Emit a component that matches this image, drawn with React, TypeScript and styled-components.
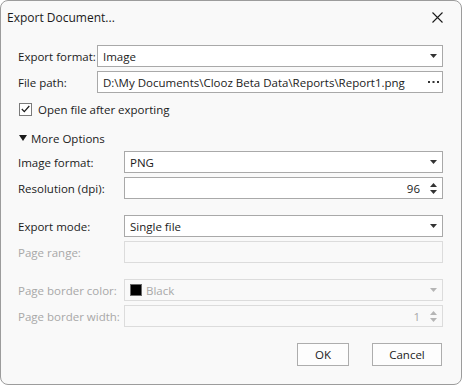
import styled, { createGlobalStyle } from "styled-components";

const GlobalStyle = createGlobalStyle`
  html, body {
    margin: 0;
    padding: 0;
    background: #ffffff;
  }
  * {
    box-sizing: border-box;
  }
`;

const Dialog = styled.div`
  width: 462px;
  height: 385px;
  border: 1px solid #9c9c9c;
  border-radius: 8px;
  background: #f9f9f9;
  font-family: "Segoe UI", "Open Sans", "Noto Sans", sans-serif;
  font-size: 11.5px;
  color: #1b1b1b;
  display: flex;
  flex-direction: column;
  overflow: hidden;
`;

const TitleBar = styled.div`
  height: 33px;
  display: flex;
  align-items: center;
  justify-content: space-between;
  padding: 0 18px 0 6px;
`;

const Title = styled.span`
  font-size: 12px;
`;

const CloseButton = styled.button`
  border: none;
  background: none;
  padding: 0;
  width: 12px;
  height: 12px;
  display: flex;
  align-items: center;
  justify-content: center;
`;

const Content = styled.div`
  padding: 11px 18px 0 17px;
  display: flex;
  flex-direction: column;
`;

const Group = styled.div<{ $label: number; $top?: number }>`
  display: grid;
  grid-template-columns: ${(p) => p.$label}px 1fr;
  row-gap: 4px;
  align-items: center;
  margin-top: ${(p) => p.$top ?? 0}px;
`;

const Label = styled.span<{ $disabled?: boolean }>`
  color: ${(p) => (p.$disabled ? "#a8a8a8" : "#1b1b1b")};
  white-space: nowrap;
`;

const Field = styled.div<{ $disabled?: boolean; $right?: boolean }>`
  height: 22px;
  border: 1px solid ${(p) => (p.$disabled ? "#dcdcdc" : "#a9a9a9")};
  background: ${(p) => (p.$disabled ? "#f9f9f9" : "#ffffff")};
  color: ${(p) => (p.$disabled ? "#a8a8a8" : "#1b1b1b")};
  display: flex;
  align-items: center;
  padding-left: 5px;
  gap: 4px;
`;

const FieldText = styled.span<{ $right?: boolean }>`
  flex: 1;
  text-align: ${(p) => (p.$right ? "right" : "left")};
  white-space: nowrap;
  overflow: hidden;
`;

const Side = styled.span`
  width: 18px;
  height: 100%;
  display: flex;
  flex-direction: column;
  align-items: center;
  justify-content: center;
  gap: 3px;
`;

const Swatch = styled.span`
  width: 12px;
  height: 12px;
  background: #000000;
  border: 1px solid #6a6a6a;
`;

const CheckRow = styled.label`
  height: 20px;
  margin-top: 6px;
  display: flex;
  align-items: center;
  gap: 6px;
  padding-left: 1px;
`;

const CheckBox = styled.span`
  width: 13px;
  height: 13px;
  border: 1px solid #7a7a7a;
  background: #ffffff;
  display: flex;
  align-items: center;
  justify-content: center;
`;

const Expander = styled.div`
  height: 20px;
  margin-top: 9px;
  display: flex;
  align-items: center;
  gap: 4px;
  padding-left: 1px;
`;

const Buttons = styled.div`
  margin-top: 16px;
  display: flex;
  justify-content: flex-end;
  gap: 23px;
  padding-right: 1px;
`;

const Button = styled.button<{ $width: number }>`
  width: ${(p) => p.$width}px;
  height: 23px;
  border: 1px solid #adadad;
  background: #fdfdfd;
  font: inherit;
  color: #1b1b1b;
  padding: 0;
`;

const Arrow = ({ up, color = "#333" }: { up?: boolean; color?: string }) => (
  <svg width="7" height="4" viewBox="0 0 7 4">
    <path d={up ? "M0 4 L3.5 0 L7 4 Z" : "M0 0 L7 0 L3.5 4 Z"} fill={color} />
  </svg>
);

const Combo = ({ text, disabled, children }: { text?: string; disabled?: boolean; children?: React.ReactNode }) => (
  <Field $disabled={disabled}>
    {children}
    <FieldText>{text}</FieldText>
    <Side>
      <Arrow color={disabled ? "#b5b5b5" : "#333"} />
    </Side>
  </Field>
);

const Spin = ({ value, disabled }: { value: string; disabled?: boolean }) => (
  <Field $disabled={disabled}>
    <FieldText $right>{value}</FieldText>
    <Side>
      <Arrow up color={disabled ? "#b5b5b5" : "#333"} />
      <Arrow color={disabled ? "#b5b5b5" : "#333"} />
    </Side>
  </Field>
);

const App = () => {
  return (
    <>
      <GlobalStyle />
      <Dialog>
        <TitleBar>
          <Title>Export Document...</Title>
          <CloseButton>
            <svg width="11" height="11" viewBox="0 0 11 11">
              <path d="M0.5 0.5 L10.5 10.5 M10.5 0.5 L0.5 10.5" stroke="#1b1b1b" strokeWidth="1.1" />
            </svg>
          </CloseButton>
        </TitleBar>
        <Content>
          <Group $label={79}>
            <Label>Export format:</Label>
            <Combo text="Image" />
            <Label>File path:</Label>
            <Field>
              <FieldText>D:\My Documents\Clooz Beta Data\Reports\Report1.png</FieldText>
              <Side>
                <svg width="11" height="3" viewBox="0 0 11 3">
                  <rect x="0" y="0" width="2" height="2" fill="#333" />
                  <rect x="4.5" y="0" width="2" height="2" fill="#333" />
                  <rect x="9" y="0" width="2" height="2" fill="#333" />
                </svg>
              </Side>
            </Field>
          </Group>
          <CheckRow>
            <CheckBox>
              <svg width="9" height="8" viewBox="0 0 9 8">
                <path d="M0.8 4 L3.3 6.6 L8.3 1" stroke="#1b1b1b" strokeWidth="1.2" fill="none" />
              </svg>
            </CheckBox>
            <span>Open file after exporting</span>
          </CheckRow>
          <Expander>
            <svg width="8" height="6" viewBox="0 0 8 6">
              <path d="M0 0 L8 0 L4 6 Z" fill="#1b1b1b" />
            </svg>
            <span>More Options</span>
          </Expander>
          <Group $label={106} $top={3}>
            <Label>Image format:</Label>
            <Combo text="PNG" />
            <Label>Resolution (dpi):</Label>
            <Spin value="96" />
          </Group>
          <Group $label={106} $top={16}>
            <Label>Export mode:</Label>
            <Combo text="Single file" />
            <Label $disabled>Page range:</Label>
            <Field $disabled />
          </Group>
          <Group $label={106} $top={16}>
            <Label $disabled>Page border color:</Label>
            <Combo text="Black" disabled>
              <Swatch />
            </Combo>
            <Label $disabled>Page border width:</Label>
            <Spin value="1" disabled />
          </Group>
          <Buttons>
            <Button $width={52}>OK</Button>
            <Button $width={70}>Cancel</Button>
          </Buttons>
        </Content>
      </Dialog>
    </>
  );
};

export default App;
